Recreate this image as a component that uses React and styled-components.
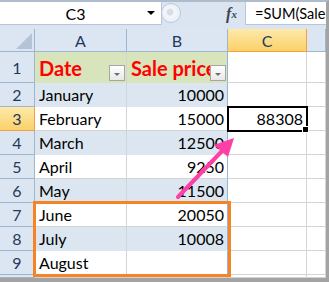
import React from 'react';
import styled, {createGlobalStyle, css} from 'styled-components';

const GlobalStyle = createGlobalStyle`
  body {
    margin: 0;
    background: #ffffff;
  }
`;

const Frame = styled.div`
  position: relative;
  width: 329px;
  height: 282px;
  box-sizing: border-box;
  border-top: 2px solid #aebccb;
  border-right: 3px solid #a3a3a3;
  border-bottom: 4px solid #a3a3a3;
  overflow: hidden;
  font-family: Lato, "Liberation Sans", sans-serif;
  background: #ffffff;
`;

const FormulaBar = styled.div`
  display: flex;
  align-items: stretch;
  height: 27px;
  box-sizing: border-box;
  padding-bottom: 4px;
  background: #dbe5f1;
`;

const NameBox = styled.div`
  width: 162px;
  box-sizing: border-box;
  background: #ffffff;
  border-right: 1px solid #b6c7db;
  border-bottom: 1px solid #b6c7db;
  display: flex;
  align-items: center;
  padding-right: 6px;
  font-size: 16px;
  color: #000;
`;

const NameText = styled.span`
  flex: 1;
  text-align: center;
  padding-left: 4px;
`;

const DropArrow = styled.span`
  width: 0;
  height: 0;
  border-left: 4px solid transparent;
  border-right: 4px solid transparent;
  border-top: 4px solid #000;
`;

const Splitter = styled.div`
  width: 20px;
  height: 20px;
  margin: 1px 0 0 -1px;
  border-radius: 50%;
  box-sizing: border-box;
  border: 1px solid #b9c8da;
  background: radial-gradient(circle at 45% 45%, #d9dee5 0 3px, #f4f7fb 4px, #e3eaf3 100%);
`;

const FxButton = styled.div`
  margin-left: 40px;
  width: 21px;
  display: flex;
  align-items: center;
  justify-content: center;
  font-family: "Liberation Serif", serif;
  font-style: italic;
  font-weight: bold;
  font-size: 16px;
  color: #3b4756;

  small {
    font-size: 11px;
  }
`;

const FormulaInput = styled.div`
  flex: 1;
  min-width: 0;
  margin-left: 3px;
  background: #ffffff;
  border-left: 1px solid #b6c7db;
  border-bottom: 1px solid #b6c7db;
  display: flex;
  align-items: center;
  padding-left: 9px;
  font-size: 14.5px;
  white-space: nowrap;
  overflow: hidden;
  color: #000;
`;

const Sheet = styled.div`
  display: grid;
  grid-template-columns: 35px 92px 101px 79px 1fr;
  grid-template-rows: 23px 31px repeat(8, 24px) 1fr;
  height: calc(100% - 27px);
`;

const headerSelected = css`
  background: linear-gradient(#fde9a9, #fbd16a);
  border-color: #f1a042;
`;

const ColHeader = styled.div`
  box-sizing: border-box;
  display: flex;
  align-items: center;
  justify-content: center;
  background: #dce6f2;
  border-right: 1px solid #9eb6ce;
  border-bottom: 1px solid #9eb6ce;
  font-size: 16px;
  color: #1f3a5c;
  ${p => p.$selected && headerSelected}
`;

const Corner = styled(ColHeader)`
  justify-content: flex-end;
  align-items: flex-end;
  padding: 0 2px 2px 0;
`;

const RowHeader = styled(ColHeader)`
  font-size: 16px;
`;

const Cell = styled.div`
  position: relative;
  box-sizing: border-box;
  display: flex;
  align-items: flex-end;
  justify-content: ${p => (p.$num ? 'flex-end' : 'flex-start')};
  padding: 0 3px 1px 4px;
  font-size: 16px;
  line-height: 20px;
  color: #000;
  white-space: nowrap;
  background: ${p => p.$bg || '#ffffff'};
  border-right: 1px solid ${p => p.$edge || '#d4d4d4'};
  border-bottom: 1px solid ${p => (p.$bg ? 'transparent' : '#d4d4d4')};
  ${p => p.$selected && css`
    outline: 2px solid #000;
    outline-offset: -1px;
    z-index: 2;
    &::after {
      content: '';
      position: absolute;
      right: -3px;
      bottom: -3px;
      width: 5px;
      height: 5px;
      background: #000;
      border: 1px solid #fff;
    }
  `}
`;

const HeadCell = styled(Cell)`
  background: #d8e4bc;
  border-bottom-color: #d8e4bc;
  font-weight: bold;
  font-size: 20px;
  line-height: 24px;
  color: #ff0000;
  overflow: hidden;
  padding-bottom: 2px;
`;

const FilterButton = styled.span`
  position: absolute;
  right: 1px;
  bottom: 1px;
  width: 16px;
  height: 16px;
  box-sizing: border-box;
  border: 1px solid #a6a6a6;
  background: linear-gradient(#ffffff, #e8e8e8);
  display: flex;
  align-items: center;
  justify-content: center;

  &::before {
    content: '';
    border-left: 3px solid transparent;
    border-right: 3px solid transparent;
    border-top: 3px solid #6d6d6d;
    margin-top: 2px;
  }
`;

const Highlight = styled.div`
  position: absolute;
  left: 33px;
  top: 199px;
  width: 198px;
  height: 76px;
  box-sizing: border-box;
  border: 3px solid #f58427;
  pointer-events: none;
`;

const Overlay = styled.svg`
  position: absolute;
  left: 0;
  top: 0;
  pointer-events: none;
`;

const rows = [
  ['January', '10000'],
  ['February', '15000', '88308'],
  ['March', '12500'],
  ['April', '9250'],
  ['May', '11500'],
  ['June', '20050'],
  ['July', '10008'],
  ['August', ''],
];

const App = () => {
  return (
    <Frame>
      <GlobalStyle/>
      <FormulaBar>
        <NameBox>
          <NameText>C3</NameText>
          <DropArrow/>
        </NameBox>
        <Splitter/>
        <FxButton>f<small>x</small></FxButton>
        <FormulaInput>=SUM(Salep</FormulaInput>
      </FormulaBar>
      <Sheet>
        <Corner>
          <svg width="16" height="16" viewBox="0 0 16 16">
            <polygon points="16,0 16,16 0,16" fill="#b4c3d6"/>
          </svg>
        </Corner>
        <ColHeader>A</ColHeader>
        <ColHeader>B</ColHeader>
        <ColHeader $selected>C</ColHeader>
        <ColHeader/>

        <RowHeader>1</RowHeader>
        <HeadCell>Date<FilterButton/></HeadCell>
        <HeadCell $edge="#95b3d7">Sale price<FilterButton/></HeadCell>
        <Cell/>
        <Cell/>

        {rows.map(([month, price, c], i) => {
          const n = i + 2;
          const bg = n % 2 === 0 ? '#dce6f1' : null;
          return (
            <React.Fragment key={month}>
              <RowHeader $selected={n === 3}>{n}</RowHeader>
              <Cell $bg={bg}>{month}</Cell>
              <Cell $bg={bg} $num $edge="#95b3d7">{price}</Cell>
              <Cell $num $selected={!!c}>{c}</Cell>
              <Cell/>
            </React.Fragment>
          );
        })}

        <RowHeader/>
        <Cell/>
        <Cell $edge="#95b3d7"/>
        <Cell/>
        <Cell/>
      </Sheet>
      <Highlight/>
      <Overlay width="329" height="282">
        <line x1="178" y1="195" x2="222" y2="149" stroke="#ff3fa6" strokeWidth="4" strokeLinecap="round"/>
        <polygon points="234,136 214,143 228,155" fill="#ff3fa6"/>
      </Overlay>
    </Frame>
  );
};

export default App;
